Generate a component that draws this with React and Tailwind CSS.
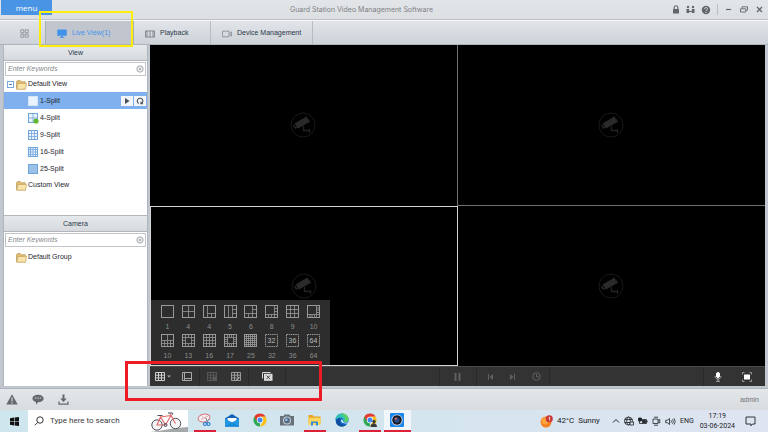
import clsx from "clsx";

const layouts = [
  { label: "1", path: "" },
  { label: "4", path: "M6.5 1v11M1 6.5h11" },
  { label: "4", path: "M4.5 1v11M4.5 8.5H12M8.5 8.5V12" },
  { label: "5", path: "M4.5 1v11M8.5 1v11M8.5 4.5H12M8.5 8.5H12" },
  { label: "6", path: "M8.5 1v11M1 8.5h11M8.5 4.5H12M4.5 8.5V12" },
  { label: "8", path: "M9.5 1v11M1 9.5h11M9.5 3.5H12M9.5 6.5H12M3.5 9.5V12M6.5 9.5V12" },
  { label: "9", path: "M4.5 1v11M8.5 1v11M1 4.5h11M1 8.5h11" },
  { label: "10", path: "M9.5 1v11M1 9.5h11M9.5 3H12M9.5 5H12M9.5 7.5H12M3 9.5V12M5 9.5V12M7.5 9.5V12" },
  { label: "10", path: "M6.5 1v5M1 6.5h11M1 9.5h11M3.5 6.5V12M6.5 6.5V12M9.5 6.5V12" },
  { label: "13", path: "M1 3.5h11M1 9.5h11M3.5 1v11M9.5 1v11M6.5 1v2M6.5 10v2M1 6.5h2M10 6.5h2" },
  { label: "16", path: "M3.5 1v11M6.5 1v11M9.5 1v11M1 3.5h11M1 6.5h11M1 9.5h11" },
  { label: "17", path: "M1 3.5h11M1 9.5h11M3.5 1v11M9.5 1v11M5.5 1v2M7.5 1v2M5.5 10v2M7.5 10v2M1 5.5h2M1 7.5h2M10 5.5h2M10 7.5h2" },
  { label: "25", path: "M2.5 1v11M4.5 1v11M6.5 1v11M8.5 1v11M10.5 1v11M1 2.5h11M1 4.5h11M1 6.5h11M1 8.5h11M1 10.5h11" },
  { label: "32", text: true },
  { label: "36", text: true },
  { label: "64", text: true },
];

const splits = [
  { name: "1-Split", path: "", selected: true },
  { name: "4-Split", path: "M5 0v10M0 5h10", online: true },
  { name: "9-Split", path: "M3.5 0v10M6.5 0v10M0 3.5h10M0 6.5h10" },
  { name: "16-Split", path: "M2.5 0v10M5 0v10M7.5 0v10M0 2.5h10M0 5h10M0 7.5h10" },
  { name: "25-Split", path: "M2 0v10M4 0v10M6 0v10M8 0v10M0 2h10M0 4h10M0 6h10M0 8h10" },
];

function FolderIcon() {
  return (
    <svg width="11" height="10" viewBox="0 0 11 10" className="shrink-0">
      <path d="M.5 8.8V1.6L1.4.6h3l1 1.1h3.8v7.4z" fill="#e0bf74" stroke="#b08f4a" strokeWidth=".6" />
      <path d="M2 3.4h8.6L9.5 9.2H.7z" fill="#f8e3a9" stroke="#bd9b56" strokeWidth=".6" />
    </svg>
  );
}

function SplitIcon({ path, online, selected }) {
  return (
    <svg width="10" height="10" viewBox="0 0 10 10" className="shrink-0 overflow-visible">
      <rect x=".5" y=".5" width="9" height="9" fill="#eaf3fd" stroke={selected ? "#d3e5f9" : "#6ea4dc"} />
      <path d={path} stroke="#6ea4dc" strokeWidth=".8" />
      {online && <circle cx="8" cy="8" r="2.6" fill="#63b62f" />}
    </svg>
  );
}

function CameraIcon() {
  return (
    <svg width="26" height="26" viewBox="0 0 26 26" fill="none">
      <circle cx="13" cy="13" r="12" stroke="#191919" />
      <path d="M4.5 11.5 16.5 4.5l3 5.5L8 16.5z" fill="#2a2a2a" />
      <path d="m3.5 13 1.8 3 2-1.2M17.5 7l2 3.2" stroke="#262626" strokeWidth="1.5" />
      <path d="M13.5 14v4.5H19M19.5 17v4" stroke="#222" strokeWidth="1.3" />
    </svg>
  );
}

function LayoutIcon({ item }) {
  return (
    <svg width="13" height="13" viewBox="0 0 13 13" fill="none" stroke="#999">
      {item.text ? (
        <>
          <rect x=".5" y=".5" width="12" height="12" strokeDasharray="1.5 .7" />
          <text x="6.5" y="9" textAnchor="middle" fontSize="7" fill="#bcbcbc" stroke="none">
            {item.label}
          </text>
        </>
      ) : (
        <>
          <rect x=".5" y=".5" width="12" height="12" />
          <path d={item.path} strokeWidth=".8" />
        </>
      )}
    </svg>
  );
}

function TitleBar() {
  return (
    <header className="flex h-5 items-center justify-between border-b border-[#bfc1c4] bg-linear-to-b from-[#e3e6e9] to-[#dcdfe2] px-px">
      <div className="flex flex-1 self-start">
        <button className="h-[15px] w-[51px] bg-[#4994e5] text-[8px] leading-[15px] text-white font-['Open_Sans',sans-serif]">
          menu
        </button>
      </div>
      <h1 className="mr-[42px] pt-[2px] text-[7px] text-[#7d8084] font-[Inter,sans-serif]">
        Guard Station Video Management Software
      </h1>
      <div className="flex flex-1 items-center justify-end gap-[6px] pr-[3px] text-[#63676b]">
        <button aria-label="Lock">
          <svg width="8" height="9" viewBox="0 0 8 9">
            <path d="M2.2 4V2.6a1.8 1.8 0 0 1 3.6 0V4" fill="none" stroke="currentColor" strokeWidth="1.1" />
            <rect x="1" y="4" width="6" height="4.5" rx=".5" fill="currentColor" />
          </svg>
        </button>
        <button aria-label="Switch user">
          <svg width="9" height="9" viewBox="0 0 9 9" fill="currentColor">
            <circle cx="2" cy="2" r="1.2" />
            <circle cx="7" cy="2" r="1.2" />
            <path d="M.5 8V4h2.7v2h2.6V4h2.7v4H5.8V7H3.2v1z" />
          </svg>
        </button>
        <button aria-label="Help">
          <svg width="10" height="10" viewBox="0 0 10 10">
            <circle cx="5" cy="5" r="4.2" fill="currentColor" />
            <path d="M3.6 4c0-2 2.9-1.9 2.9-.2C6.5 5 5 4.9 5 6.1M5 7v1" fill="none" stroke="#e3e6e9" strokeWidth="1" />
          </svg>
        </button>
        <span className="h-[11px] w-px bg-[#bcbfc2]" />
        <button aria-label="Minimize">
          <svg width="9" height="9" viewBox="0 0 9 9" stroke="currentColor">
            <path d="M2 4.5h5" strokeWidth="1.2" />
          </svg>
        </button>
        <button aria-label="Restore">
          <svg width="10" height="9" viewBox="0 0 10 9" fill="none" stroke="currentColor">
            <path d="M3 3.5V1.8h5.5v3.4H7" strokeWidth=".9" />
            <path d="M1.5 3.8h5.3v3.2H1.5z" strokeWidth=".9" />
          </svg>
        </button>
        <button aria-label="Close">
          <svg width="9" height="9" viewBox="0 0 9 9" stroke="currentColor">
            <path d="m2 2 5 5M7 2 2 7" strokeWidth="1.3" />
          </svg>
        </button>
      </div>
    </header>
  );
}

function TabBar() {
  return (
    <nav className="flex h-6 items-stretch border-t border-[#f4f5f7] bg-linear-to-b from-[#e1e5e9] to-[#ced3d9] text-[7px] text-[#2b3648]">
      <button aria-label="Home" className="flex w-[45px] items-center justify-center pt-px pl-[3px]">
        <svg width="9" height="9" viewBox="0 0 9 9" fill="none" stroke="#85898e" strokeWidth=".8">
          <path d="M.8.8h3v3h-3zM5.2.8h3v3h-3zM.8 5.2h3v3h-3zM5.2 5.2h3v3h-3z" />
        </svg>
      </button>
      <button className="flex w-[89px] items-center gap-[5px] border-x border-[#a9aeb5] bg-[#c1c6ce] pt-[2px] pl-[11px] text-[#4292ea]">
        <svg width="10" height="9" viewBox="0 0 10 9">
          <rect x=".2" y=".5" width="9.6" height="6.3" rx=".5" fill="#4292ea" />
          <path d="M4 6.5h2v1.4h1.5v.8h-5v-.8H4z" fill="#4292ea" />
        </svg>
        Live View(1)
      </button>
      <button className="flex w-[77px] items-center gap-[5px] border-r border-[#b9bdc2] pt-[2px] pl-[11px]">
        <svg width="10" height="8" viewBox="0 0 10 8" fill="none" stroke="#74787d" strokeWidth=".8">
          <path d="M.5.9h9v6.2h-9zM2 1v6M8 1v6M5 1v6" />
        </svg>
        Playback
      </button>
      <button className="flex w-[102px] items-center gap-[5px] border-r border-[#b9bdc2] pt-[2px] pl-[11px]">
        <svg width="10" height="8" viewBox="0 0 10 8" fill="none" stroke="#85898e" strokeWidth=".8">
          <path d="M.5 1.2h6.5v5.6H.5zM8 3.2l1.5-1.5v4.6L8 4.8z" />
        </svg>
        Device Management
      </button>
    </nav>
  );
}

function PanelHeader({ children }) {
  return (
    <h2 className="h-4 shrink-0 border-b border-[#b3b6ba] bg-linear-to-b from-[#e6eaed] to-[#d6dade] text-center text-[7px] leading-[15px] text-[#2b3648]">
      {children}
    </h2>
  );
}

function SearchBox({ label }) {
  return (
    <div className="mx-px mt-px flex h-[14px] shrink-0 items-center border border-[#c3c5c8] pl-[2px] pr-px">
      <input
        type="text"
        aria-label={label}
        placeholder="Enter Keywords"
        className="min-w-0 flex-1 text-[7px] italic text-gray-700 outline-none placeholder:text-[#85898d]"
      />
      <button aria-label="Clear">
        <svg width="8" height="8" viewBox="0 0 8 8">
          <circle cx="4" cy="4" r="3.2" fill="#eceeef" stroke="#a0a5aa" strokeWidth=".9" />
          <path d="m2.8 2.8 2.4 2.4M5.2 2.8 2.8 5.2" stroke="#a0a5aa" strokeWidth=".8" />
        </svg>
      </button>
    </div>
  );
}

function Sidebar() {
  return (
    <aside className="flex w-[145px] shrink-0 flex-col border-x border-[#b0b6be] bg-white text-[7px] text-[#1e232c]">
      <section className="flex flex-col">
        <PanelHeader>View</PanelHeader>
        <SearchBox label="Search views" />
        <ul className="h-[139px]">
          <li className="flex h-4 items-center gap-px pt-px pl-[3px]">
            <button aria-label="Collapse" className="mr-px flex size-[7px] items-center justify-center border border-[#78a8dc]">
              <span className="h-px w-[3px] bg-[#4b87c8]" />
            </button>
            <FolderIcon />
            Default View
          </li>
          {splits.map((split) => (
            <li
              key={split.name}
              className={clsx("flex h-[17px] items-center gap-px pl-6 pr-px", split.selected && "bg-[#80b1ee]")}
            >
              <SplitIcon path={split.path} online={split.online} selected={split.selected} />
              <span className="flex-1 pt-px pl-px">{split.name}</span>
              {split.selected && (
                <div className="flex gap-px text-[#454e5a]">
                  <button aria-label="Play" className="flex h-[10px] w-3 items-center justify-center bg-[#f3f5f7]">
                    <svg width="6" height="6" viewBox="0 0 6 6" fill="currentColor">
                      <path d="M1 0 5.5 3 1 6z" />
                    </svg>
                  </button>
                  <button aria-label="Tour" className="flex h-[10px] w-3 items-center justify-center bg-[#f3f5f7]">
                    <svg width="8" height="8" viewBox="0 0 8 8" fill="none" stroke="currentColor" strokeWidth="1.1">
                      <path d="M2.8 6.5A2.8 2.8 0 1 1 5.3 6.5M5 4.8v2h2" />
                    </svg>
                  </button>
                </div>
              )}
            </li>
          ))}
          <li className="flex h-[17px] items-center gap-px pl-3">
            <FolderIcon />
            Custom View
          </li>
        </ul>
      </section>
      <section className="flex flex-1 flex-col border-t border-[#b3b6ba]">
        <PanelHeader>Camera</PanelHeader>
        <SearchBox label="Search cameras" />
        <ul className="pt-px">
          <li className="flex h-[18px] items-center gap-px pt-px pl-3">
            <FolderIcon />
            Default Group
          </li>
        </ul>
      </section>
    </aside>
  );
}

function LayoutMenu() {
  return (
    <div className="absolute bottom-full left-px mb-[2px] grid w-[179px] grid-cols-8 bg-[#2d2d2d] px-[6px] pt-[5px] pb-[2px]">
      {layouts.map((item, index) => (
        <button key={index} className="flex h-[29px] flex-col items-center gap-1 text-[7px] leading-[10px] text-[#8c8c8c]">
          <LayoutIcon item={item} />
          {item.label}
        </button>
      ))}
    </div>
  );
}

function ControlBar() {
  return (
    <div className="relative flex h-5 shrink-0 items-stretch border-t border-[#4a4a4a] bg-[#333]">
      <LayoutMenu />
      <div className="flex flex-1 items-stretch">
        <div className="flex w-[50px] items-center justify-between border-r border-[#292929] pl-[5px] pr-[7px]">
          <button aria-label="Window split" className="flex items-center gap-[2px]">
            <svg width="10" height="9" viewBox="0 0 10 9" fill="none" stroke="#ddd" strokeWidth=".9">
              <path d="M.5.5h9v8h-9zM3.5.5v8M6.5.5v8M.5 3.2h9M.5 5.9h9" />
            </svg>
            <svg width="4" height="3" viewBox="0 0 4 3" fill="#aaa">
              <path d="M0 .5h4L2 2.5z" />
            </svg>
          </button>
          <button aria-label="Original ratio">
            <svg width="10" height="9" viewBox="0 0 10 9" fill="none" stroke="#b5b5b5" strokeWidth=".9">
              <path d="M.5.5h9v8h-9zM2.5.5v6h7M2.5 6.5v2" />
            </svg>
          </button>
        </div>
        <div className="flex w-[49px] items-center justify-between border-r border-[#292929] pl-[7px] pr-[7px]">
          <button aria-label="Save view" disabled>
            <svg width="10" height="9" viewBox="0 0 10 9" fill="none" stroke="#595959" strokeWidth=".9">
              <path d="M.5.5h9v8h-9zM3.5.5v8M6.5.5v8M.5 3.2h9M.5 5.9h9" />
              <path d="M6 5h4v4H6z" fill="#595959" />
            </svg>
          </button>
          <button aria-label="Save view as">
            <svg width="10" height="9" viewBox="0 0 10 9" fill="none" stroke="#a5a5a5" strokeWidth=".9">
              <path d="M.5.5h9v8h-9zM3.5.5v8M6.5.5v5M.5 3.2h9M.5 5.9h5" />
              <path d="m5.5 8 3-3" strokeWidth="1.6" />
            </svg>
          </button>
        </div>
        <div className="flex w-[37px] items-center justify-center border-r border-[#292929]">
          <button aria-label="Close all">
            <svg width="11" height="9" viewBox="0 0 11 9">
              <path d="M.5 6.5v-6h8" fill="none" stroke="#d8d8d8" strokeWidth="1" />
              <rect x="2" y="1.8" width="8.5" height="7" fill="#ddd" />
              <path d="m4.5 3.5 3.6 3.6M8.1 3.5 4.5 7.1" stroke="#333" strokeWidth=".9" />
            </svg>
          </button>
        </div>
      </div>
      <div className="flex w-[38px] items-center justify-center border-x border-[#292929]">
        <button aria-label="Pause" disabled>
          <svg width="7" height="8" viewBox="0 0 7 8" fill="#606060">
            <path d="M.5 0h2v8h-2zM4.5 0h2v8h-2z" />
          </svg>
        </button>
      </div>
      <div className="flex flex-1 items-stretch justify-between">
        <div className="flex w-[73px] items-center justify-between border-r border-[#292929] pl-[10px] pr-2">
          <button aria-label="Previous" disabled>
            <svg width="7" height="6" viewBox="0 0 7 6" fill="#606060">
              <path d="M1 0h1v6H1zM6 0v6L2.5 3z" />
            </svg>
          </button>
          <button aria-label="Next" disabled>
            <svg width="7" height="6" viewBox="0 0 7 6" fill="#606060">
              <path d="M5 0h1v6H5zM1 0v6l3.5-3z" />
            </svg>
          </button>
          <button aria-label="Interval" disabled>
            <svg width="9" height="9" viewBox="0 0 9 9" fill="none" stroke="#606060">
              <circle cx="4.5" cy="4.5" r="3.8" />
              <path d="M4.5 2v2.7H7" />
            </svg>
          </button>
        </div>
        <div className="flex w-[62px] items-center justify-between border-l border-[#292929] pl-[10px] pr-[13px]">
          <button aria-label="Microphone">
            <svg width="8" height="10" viewBox="0 0 8 10" fill="none" stroke="#b5b5b5">
              <rect x="2.5" y=".5" width="3" height="5" rx="1.5" fill="#fff" stroke="#fff" />
              <path d="M1 4c0 4 6 4 6 0M4 7v2M2 9.3h4" strokeWidth=".9" />
            </svg>
          </button>
          <button aria-label="Full screen">
            <svg width="10" height="10" viewBox="0 0 10 10" fill="none" stroke="#9a9a9a">
              <rect x="2.5" y="3" width="5" height="4" fill="#fff" stroke="#fff" />
              <path d="M.5 2.5v-2h2M7.5.5h2v2M9.5 7.5v2h-2M2.5 9.5h-2v-2" />
            </svg>
          </button>
        </div>
      </div>
    </div>
  );
}

function VideoWall() {
  return (
    <main className="flex min-w-0 flex-1 flex-col">
      <div className="grid flex-1 grid-cols-2 grid-rows-2 bg-black">
        <div className="flex items-center justify-center border-r border-[#6f6f6f]">
          <CameraIcon />
        </div>
        <div className="flex items-center justify-center border-b border-[#6f6f6f]">
          <CameraIcon />
        </div>
        <div className="flex items-center justify-center border border-[#d5d5d5]">
          <CameraIcon />
        </div>
        <div className="flex items-center justify-center">
          <CameraIcon />
        </div>
      </div>
      <ControlBar />
    </main>
  );
}

function StatusBar() {
  return (
    <footer className="flex h-[21px] shrink-0 items-center justify-between bg-linear-to-b from-[#e4e7ea] to-[#d9dcdf] px-[6px] pr-[9px] text-[#65696e]">
      <div className="flex items-center gap-[14px]">
        <button aria-label="Alarms">
          <svg width="12" height="11" viewBox="0 0 12 11">
            <path d="M6 .3 11.7 10.6H.3z" fill="currentColor" />
            <path d="M6 3.5v3.8M6 8.2v1.2" stroke="#e4e7ea" strokeWidth="1.1" />
          </svg>
        </button>
        <button aria-label="Messages">
          <svg width="12" height="11" viewBox="0 0 12 11">
            <path d="M6 .7c7.5 0 7.5 7.6 0 7.6L4 10.7V8C-1.5 6.5-.5.7 6 .7z" fill="currentColor" />
            <path d="M3 4h1.3M5.4 4h1.3M7.8 4h1.3" stroke="#e4e7ea" strokeWidth="1.2" />
          </svg>
        </button>
        <button aria-label="Downloads">
          <svg width="11" height="11" viewBox="0 0 11 11" fill="currentColor">
            <path d="M4.5.5h2v4h2.3L5.5 8 2.2 4.5h2.3z" />
            <path d="M1 7.5v2.7h9V7.5" fill="none" stroke="currentColor" strokeWidth="1.2" />
          </svg>
        </button>
      </div>
      <span className="pt-px text-[7px] text-[#6f7277]">admin</span>
    </footer>
  );
}

function ChromeIcon({ badge }) {
  return (
    <svg width="14" height="14" viewBox="0 0 14 14">
      <path d="M7 7 7 13.5A6.5 6.5 0 0 1 1.37 3.75z" fill="#2da94f" />
      <path d="M7 3.75h5.63A6.5 6.5 0 0 0 1.37 3.75L4.2 8.6z" fill="#e33b2e" />
      <path d="M7 3.75h5.63A6.5 6.5 0 0 1 7 13.5L9.8 8.6z" fill="#fbc116" />
      <circle cx="7" cy="7" r="3.2" fill="#fff" />
      <circle cx="7" cy="7" r="2.5" fill="#4285f4" />
      {badge && (
        <g fill="#3b3b3b">
          <circle cx="11" cy="8.5" r="1.7" />
          <path d="M7.5 14c0-5 6.5-5 6.5 0z" />
        </g>
      )}
    </svg>
  );
}

const apps = [
  {
    name: "Snipping Tool",
    running: true,
    icon: (
      <svg width="15" height="14" viewBox="0 0 15 14" fill="none">
        <ellipse cx="7" cy="5" rx="6" ry="3.8" fill="#f5f0f2" stroke="#d9757b" transform="rotate(-12 7 5)" />
        <path d="M4 6.5 11 3M5 3.5l5 2.5" stroke="#d9a0a4" strokeWidth=".8" />
        <path d="m9 5 1.5 5M12 6l-3 4" stroke="#7b8da0" strokeWidth="1" />
        <circle cx="8" cy="11" r="1.5" stroke="#2d7ed0" strokeWidth="1.2" />
        <circle cx="11.5" cy="11" r="1.5" stroke="#2d7ed0" strokeWidth="1.2" />
      </svg>
    ),
  },
  {
    name: "Mail",
    icon: (
      <svg width="14" height="13" viewBox="0 0 14 13">
        <path d="M7 0 14 4.5V12.5H0V4.5z" fill="#0a62b5" />
        <path d="M2.5 4h9v5h-9z" fill="#fff" />
        <path d="M0 4.5 7 8.5l7-4v8H0z" fill="#2198e2" />
        <path d="M0 12.5 7 8l7 4.5z" fill="#168bd8" />
      </svg>
    ),
  },
  { name: "Chrome", icon: <ChromeIcon /> },
  {
    name: "Camera",
    icon: (
      <svg width="14" height="12" viewBox="0 0 14 12">
        <path d="M0 2h3.5L4.5.5h5l1 1.5H14v9.5H0z" fill="#68707a" />
        <circle cx="7" cy="6.5" r="4" fill="#c5ccd4" />
        <circle cx="7" cy="6.5" r="2.9" fill="#526982" />
        <circle cx="6.3" cy="5.8" r="1.3" fill="#9dc3ed" />
      </svg>
    ),
  },
  {
    name: "File Explorer",
    running: true,
    icon: (
      <svg width="13" height="12" viewBox="0 0 13 12">
        <path d="M.5 1h4L6 2.5h6.5V10H.5z" fill="#e9a526" />
        <path d="M.5 3.8h12V11H.5z" fill="#ffd75e" />
        <path d="M3 11.5V7.5h7v4H8V9H5v2.5z" fill="#328bd8" />
      </svg>
    ),
  },
  {
    name: "Edge",
    icon: (
      <svg width="14" height="14" viewBox="0 0 14 14">
        <circle cx="7" cy="7" r="6.5" fill="#1672ca" />
        <path d="M.5 7C.5-2 13.5-1 13.5 6.5c0 2.8-4.5 3.5-5.5 1.5 1-2.5-1.5-4-3.5-3.5S.8 5.5.5 7z" fill="#36c3b1" />
        <path d="M8 .6c3.5.3 5.5 3 5.5 5.9 0 2-2.5 2.9-4.2 2.3C11 6 10 2 6 1z" fill="#5bd260" />
        <path d="M5.8 6c-2.5 3.5 1 7 5.5 5.4C9 15 1 14 1 8.5 1.5 5.5 4 5 5.8 6z" fill="#0e4f9e" />
        <path d="M6.5 6.2c-1.5 3 1.8 4.8 5.8 4 .5-.8 0-1-.5-.7-2 .6-4.2 0-3.8-1.7z" fill="#e2f2f8" />
      </svg>
    ),
  },
  { name: "Chrome profile", running: true, icon: <ChromeIcon badge /> },
  {
    name: "Guard Station",
    running: true,
    active: true,
    icon: (
      <svg width="14" height="14" viewBox="0 0 14 14">
        <rect width="14" height="14" rx="1" fill="#1d86ec" />
        <circle cx="7" cy="7" r="5.6" fill="#e9eef4" />
        <circle cx="7" cy="7" r="4.8" fill="#171c2b" />
        <circle cx="7" cy="7" r="2.6" fill="#294a83" />
        <circle cx="5.8" cy="5.6" r="1.2" fill="#d8675d" />
      </svg>
    ),
  },
];

function Bicycle() {
  return (
    <svg width="38" height="21" viewBox="0 0 38 21" fill="none">
      <path d="M0 21c12-1 21-4 38-5v5z" fill="#a5a8aa" />
      <circle cx="7" cy="14" r="5.2" fill="#f4f4f5" stroke="#4b5060" strokeWidth="1" />
      <circle cx="25.5" cy="12.5" r="5.2" fill="#f4f4f5" stroke="#4b5060" strokeWidth="1" />
      <path d="m7 14 3.5-8 5 8zM10.5 6l10.500-1.500-5.500 9.500M20 2.500l5.500 10" stroke="#e26c6c" strokeWidth="1.2" />
      <path d="M7.5 4.5h5M18 2h4l1 1.500" stroke="#4b5060" strokeWidth="1.2" />
      <circle cx="15.5" cy="14" r="1.5" stroke="#4b5060" />
    </svg>
  );
}

function Taskbar() {
  return (
    <div className="flex h-[22px] shrink-0 items-stretch bg-linear-to-r from-[#cfe6ef] via-[#d3e5ee] to-[#dfe4f1] text-[#202328] font-[Roboto,sans-serif]">
      <button aria-label="Start" className="flex w-7 items-center justify-center">
        <svg width="9" height="9" viewBox="0 0 9 9" fill="#111">
          <path d="M0 1.2 4 .6v3.6H0zM4.6.5 9 0v4.2H4.6zM0 4.8h4v3.6L0 7.8zM4.6 4.8H9V9l-4.4-.6z" />
        </svg>
      </button>
      <label className="flex w-[160px] items-center bg-white pl-[6px]">
        <svg width="10" height="10" viewBox="0 0 10 10" fill="none" stroke="#333" className="mr-[6px] shrink-0">
          <circle cx="6" cy="4" r="3.2" />
          <path d="M3.8 6.3.8 9.3" />
        </svg>
        <input
          type="text"
          aria-label="Search"
          placeholder="Type here to search"
          className="min-w-0 flex-1 text-[8px] outline-none placeholder:text-[#3b3b3b]"
        />
        <Bicycle />
      </label>
      <div className="ml-[3px] flex w-[220px]">
        {apps.map((app) => (
          <button
            key={app.name}
            aria-label={app.name}
            className={clsx("flex flex-1 flex-col items-center", app.active && "bg-[#f0f6fa]")}
          >
            <span className="flex flex-1 items-center">{app.icon}</span>
            <span className={clsx("h-[2px]", app.active ? "w-full" : "w-[22px]", app.running && "bg-[#dc2038]")} />
          </button>
        ))}
      </div>
      <div className="flex flex-1 items-center justify-end text-[8px]">
        <button className="flex items-center gap-1">
          <svg width="13" height="13" viewBox="0 0 13 13">
            <circle cx="6" cy="7" r="5.5" fill="#f58220" />
            <circle cx="5" cy="6" r="3.5" fill="#fba23c" />
            <circle cx="9.3" cy="3.7" r="3.5" fill="#c93636" />
            <path d="m8.7 2.9.9-.7v3.3" fill="none" stroke="#fff" strokeWidth=".8" />
          </svg>
          <span>42°C</span>
          <span>Sunny</span>
        </button>
        <div className="ml-3 flex items-center gap-1">
          <button aria-label="Show hidden icons">
            <svg width="8" height="8" viewBox="0 0 8 8" fill="none" stroke="currentColor">
              <path d="m1 5.5 3-3 3 3" />
            </svg>
          </button>
          <svg width="10" height="10" viewBox="0 0 10 10" fill="none" stroke="currentColor" strokeWidth=".8">
            <circle cx="4.5" cy="5" r="4" />
            <ellipse cx="4.5" cy="5" rx="1.8" ry="4" />
            <path d="M.5 3.5h8M.5 6.5h8" />
            <path d="M6 6h3.5v3H6z" fill="#dde4f0" />
          </svg>
          <svg width="10" height="8" viewBox="0 0 10 8" fill="none" stroke="currentColor" strokeWidth=".8">
            <path d="M1.5 2.5h7v4h-7zM9.3 3.7v1.5" />
            <path d="M4.5 3.3h3.2v2.4H4.5zM.5 1h3v3h-3z" fill="currentColor" />
          </svg>
          <svg width="9" height="10" viewBox="0 0 9 10" fill="none" stroke="currentColor" strokeWidth=".8">
            <path d="M1 3h5v4.5H1zM6 4.5l1.8-1v3.5L6 6M2 1.2h4M2 9.2h4" />
          </svg>
          <svg width="11" height="9" viewBox="0 0 11 9" fill="none" stroke="currentColor" strokeWidth=".8">
            <path d="M.7 3.3h1.6L4.5 1.5v6L2.3 5.7H.7zM6 3.3q1 1.2 0 2.4M7.5 2.3q1.8 2.2 0 4.4M9 1.3q2.5 3.2 0 6.4" />
          </svg>
          <span className="text-[7px]">ENG</span>
        </div>
        <div className="ml-[6px] text-center text-[7px] leading-[10px]">
          <div>17:19</div>
          <div>03-06-2024</div>
        </div>
        <button aria-label="Notifications" className="ml-[10px] mr-3">
          <svg width="11" height="11" viewBox="0 0 11 11" fill="none" stroke="currentColor" strokeWidth=".9">
            <path d="M1 1h9v7H7.5L6 9.8V8H1z" />
          </svg>
        </button>
      </div>
    </div>
  );
}

function App() {
  return (
    <div className="relative flex h-screen min-h-[400px] flex-col overflow-hidden bg-[#c1c7cf] font-['Liberation_Sans',Arial,sans-serif]">
      <TitleBar />
      <TabBar />
      <div className="flex min-h-0 flex-1 gap-[2px] border-y border-[#aeb4bc] px-[3px] pb-[2px]">
        <Sidebar />
        <VideoWall />
      </div>
      <StatusBar />
      <Taskbar />

      {/* Highlight frames */}
      <div className="pointer-events-none absolute top-[11px] left-[39px] h-9 w-[94px] border-2 border-[#ffee08]" />
      <div className="pointer-events-none absolute bottom-[31px] left-[125px] h-10 w-[197px] border-[3px] border-[#ed1c24]" />
    </div>
  );
}

export default App;
